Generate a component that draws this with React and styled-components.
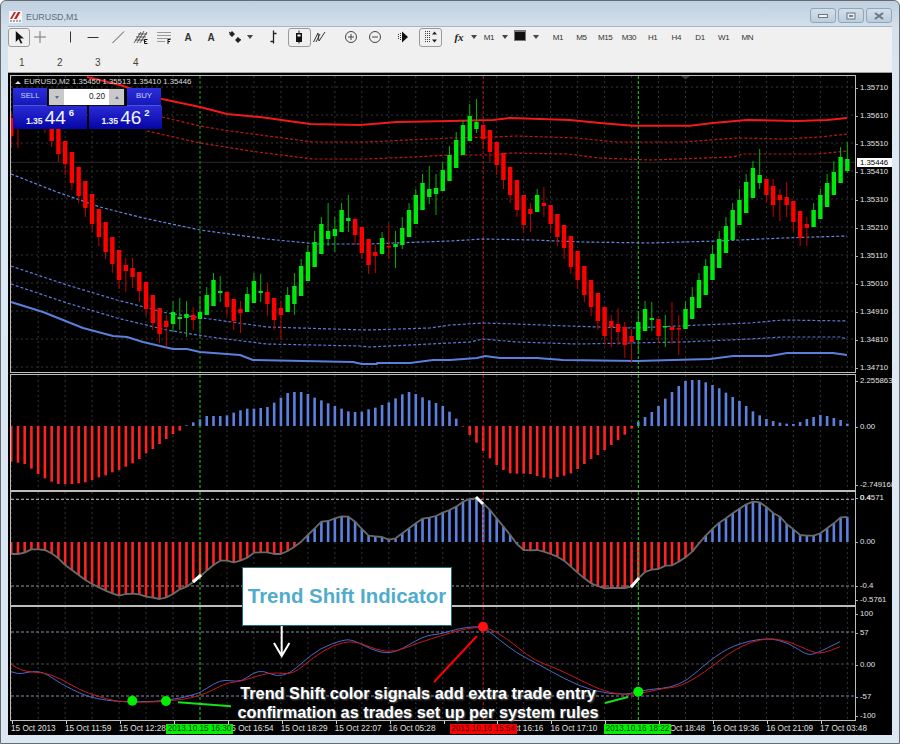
import React from "react";
import styled, { createGlobalStyle } from "styled-components";

const GlobalStyle = createGlobalStyle`
  html, body { margin: 0; padding: 0; background: #fff; }
  body { font-family: "Liberation Sans", Arial, sans-serif; }
`;

const Window = styled.div`
  box-sizing: border-box;
  width: 900px;
  height: 744px;
  display: flex;
  flex-direction: column;
  padding: 0 7px 8px 7px;
  border: 1px solid #666b70;
  border-radius: 6px 6px 0 0;
  background: linear-gradient(#bfd0e0 0, #d4e0ec 26px, #dce8f3 100px, #dbe7f3 100%);
  overflow: hidden;
`;

const TitleBar = styled.div`
  height: 25px;
  display: flex;
  justify-content: space-between;
  align-items: flex-start;
`;
const TitleLeft = styled.div`
  display: flex;
  align-items: center;
  gap: 4px;
  margin: 9px 0 0 1px;
  height: 13px;
`;
const TitleText = styled.span`
  font-size: 8.9px;
  color: #5d6c7a;
`;
const WinControls = styled.div`
  display: flex;
  gap: 2px;
  margin-top: 7px;
`;
const WinButton = styled.div`
  box-sizing: border-box;
  width: 26px;
  height: 15px;
  display: flex;
  align-items: center;
  justify-content: center;
  border: 1px solid #8fa6bb;
  border-radius: 3px;
  background: linear-gradient(#d3dfe9, #bccddc);
`;

const Toolbar = styled.div`
  height: 47px;
  box-sizing: border-box;
  background: #f0f0f0;
  border-top: 1px solid #a3b6c6;
  border-bottom: 1px solid #a0a0a0;
  display: flex;
  flex-direction: column;
`;
const ToolRow = styled.div`
  display: flex;
  align-items: center;
  height: 20px;
`;
const Tool = styled.div`
  box-sizing: border-box;
  flex: none;
  width: ${(p) => p.$w || 20}px;
  height: ${(p) => (p.$pressed ? 19 : 20)}px;
  margin-left: ${(p) => p.$ml || 0}px;
  display: flex;
  align-items: center;
  justify-content: center;
  border: ${(p) => (p.$pressed ? "1px solid #9a9a9a" : "none")};
  border-radius: 3px;
  font-size: ${(p) => (p.$period ? 8 : 10)}px;
  font-weight: ${(p) => (p.$letter ? 700 : 400)};
  letter-spacing: ${(p) => (p.$period ? -0.4 : 0)}px;
  color: #333;
`;
const FxGlyph = styled.span`
  font-family: "Liberation Serif", serif;
  font-style: italic;
  font-weight: 700;
  font-size: 11px;
  color: #222;
`;
const Caret = styled.span`
  width: 0;
  height: 0;
  border-left: 3.5px solid transparent;
  border-right: 3.5px solid transparent;
  border-top: 4px solid #444;
`;
const ColorBox = styled.span`
  box-sizing: border-box;
  width: 12px;
  height: 11px;
  margin-top: -3px;
  border: 1px solid #777;
  border-top-width: 2px;
  background: #111;
`;
const NumberRow = styled.div`
  display: flex;
  padding-left: 11px;
  margin-top: 10px;
`;
const NumberCell = styled.span`
  width: 38px;
  font-size: 10px;
  color: #4d3d2a;
`;

const Chart = styled.div`
  position: relative;
  flex: 1;
  background: #000;
  padding: 2px 0 0 2px;
  display: flex;
  flex-direction: column;
`;
const Pane = styled.div`
  display: flex;
  height: ${(p) => p.$h}px;
  margin-bottom: ${(p) => p.$mb || 0}px;
`;
const PlotSvg = styled.svg`
  display: block;
  flex: none;
  width: 846px;
  height: 100%;
  outline: 1px solid #bdbdbd;
  outline-offset: -1px;
`;
const Axis = styled.div`
  flex: 1;
  overflow: hidden;
  padding-top: ${(p) => p.$top}px;
  box-sizing: border-box;
  display: flex;
  flex-direction: column;
`;
const AxisTick = styled.div`
  height: ${(p) => p.$h || 0}px;
  flex: none;
  display: flex;
  gap: 2px;
  font-size: 7.8px;
  line-height: 0;
  white-space: nowrap;
  color: #e2e2e2;
  &::before {
    content: "";
    flex: none;
    width: 2px;
    height: 1px;
    background: #aaa;
  }
`;
const TimeAxis = styled.div`
  position: relative;
  flex: 1;
  display: grid;
  grid-template-columns: repeat(16, 53.94px);
  padding-left: 1px;
`;
const TimeCell = styled.div`
  font-size: 8.2px;
  line-height: 9px;
  white-space: nowrap;
  color: #e2e2e2;
  &::before {
    content: "";
    display: block;
    width: 1px;
    height: 3px;
    margin-left: 1px;
    background: #d0d0d0;
  }
`;
const TimeTag = styled.div`
  position: absolute;
  top: 3px;
  left: ${(p) => p.$left}px;
  width: 67px;
  height: 10px;
  line-height: 10px;
  text-align: center;
  font-size: 8.2px;
  color: ${(p) => p.$fg};
  background: ${(p) => p.$bg};
`;

const PriceTag = styled.div`
  position: absolute;
  left: 849px;
  top: 85px;
  width: 35px;
  height: 9px;
  line-height: 9px;
  padding-left: 3px;
  box-sizing: border-box;
  font-size: 7.8px;
  color: #000;
  background: #fff;
`;
const ChartHeader = styled.div`
  position: absolute;
  left: 7px;
  top: 4px;
  display: flex;
  align-items: center;
  gap: 3px;
  font-size: 7.8px;
  line-height: 10px;
  white-space: pre;
  color: #dcdcdc;
  &::before {
    content: "";
    width: 0;
    height: 0;
    border-left: 3px solid transparent;
    border-right: 3px solid transparent;
    border-bottom: 3px solid #ddd;
  }
`;

const TradePanel = styled.div`
  position: absolute;
  left: 5px;
  top: 15px;
  width: 149px;
  display: flex;
  flex-direction: column;
`;
const TradeTop = styled.div`
  display: flex;
  gap: 1px;
  height: 18px;
`;
const TradeBtn = styled.div`
  flex: none;
  width: 34px;
  margin-left: ${(p) => p.$ml || 0}px;
  box-sizing: border-box;
  text-align: center;
  font-size: 7.8px;
  line-height: 16px;
  color: #c9d6ff;
  background: linear-gradient(#2b2ddc, #1518b8);
  border-bottom: 1px solid #4a55d8;
`;
const LotBox = styled.div`
  flex: none;
  width: 77px;
  box-sizing: border-box;
  display: flex;
  align-items: stretch;
  border: 1px solid #111;
  background: #c9c9c9;
`;
const Spin = styled.div`
  width: 15px;
  display: flex;
  align-items: center;
  justify-content: center;
  &::before {
    content: "";
    width: 0;
    height: 0;
    border-left: 2.5px solid transparent;
    border-right: 2.5px solid transparent;
    border-${(p) => (p.$up ? "bottom" : "top")}: 3px solid #5a6a9a;
  }
`;
const LotValue = styled.div`
  flex: 1;
  background: #fff;
  font-size: 8.2px;
  line-height: 16px;
  text-align: right;
  padding-right: 4px;
  color: #222;
`;
const TradeBottom = styled.div`
  display: flex;
  gap: 2px;
`;
const Quote = styled.div`
  width: ${(p) => p.$w}px;
  height: 23px;
  box-sizing: border-box;
  display: flex;
  justify-content: center;
  align-items: flex-start;
  color: #f2f4ff;
  background: linear-gradient(#2a2bd6, #0505a4);
`;
const QuoteSmall = styled.span`
  font-size: 8.6px;
  font-weight: 700;
  line-height: 10px;
  margin: 10px 2px 0 0;
`;
const QuoteBig = styled.span`
  font-size: 19px;
  line-height: 21px;
  margin-top: 1px;
`;
const QuoteSup = styled.span`
  font-size: 9.5px;
  font-weight: 700;
  line-height: 10px;
  margin: 2px 0 0 3px;
`;

const Overlay = styled.svg`
  position: absolute;
  left: 0;
  top: 0;
  pointer-events: none;
`;
const Callout = styled.div`
  position: absolute;
  left: 234px;
  top: 494px;
  width: 210px;
  height: 59px;
  box-sizing: border-box;
  border: 1px solid #1f6f82;
  background: #fff;
  display: flex;
  align-items: center;
  justify-content: center;
  font-size: 20.4px;
  font-weight: 700;
  color: #4faccb;
`;
const Note = styled.div`
  position: absolute;
  left: 229px;
  top: 611px;
  width: 362px;
  text-align: center;
  font-size: 16.3px;
  line-height: 19px;
  font-weight: 700;
  white-space: nowrap;
  color: #fff;
  text-shadow: 1px 1px 2px #666;
`;

const X0 = 11.2;
const STEP = 6.743;
const xi = (i) => X0 + STEP * i;
const idx = (n) => Array.from({ length: n }, (_, i) => i);

const CANDLES = [
  ["r",118,136,112,147],["r",112,128,108,148],["r",105,122,100,128],["r",102,122,98,128],["r",104,124,100,128],["r",112,128,108,133],
  ["r",118,141,112,147],["r",124,154,120,162],["r",141,164,141,175],["r",152,183,152,190],["r",167,196,167,203],["r",181,208,181,217],
  ["r",194,224,194,232],["r",209,237,209,246],["r",222,252,222,259],["r",237,264,237,273],["r",250,280,250,289],["r",265,271,258,292],
  ["r",268,277,258,288],["r",272,291,272,302],["r",282,309,282,316],["r",295,323,295,330],["r",308,334,308,343],["r",321,327,315,347],
  ["g",312,324,301,332],["g",317,319,298,330],["g",314,318,301,337],["r",315,320,307,330],["g",312,319,298,331],["g",295,315,287,315],
  ["g",280,306,273,306],["g",291,293,276,302],["r",292,307,291,316],["r",299,321,299,330],["r",309,313,301,333],["g",294,312,287,312],
  ["g",281,303,273,303],["g",291,293,274,302],["r",292,304,283,316],["r",298,320,298,330],["r",308,315,301,340],["g",295,312,287,312],
  ["g",286,304,273,315],["g",266,296,259,296],["g",252,281,245,281],["g",242,267,231,267],["g",224,254,217,254],["g",231,239,203,246],
  ["g",229,236,217,252],["g",210,232,203,232],["g",218,221,195,232],["r",219,235,218,245],["r",227,253,227,259],["r",239,265,239,274],
  ["r",252,256,245,273],["g",238,254,232,254],["r",246,247,223,259],["g",244,247,231,268],["g",228,245,217,249],["g",210,237,203,237],
  ["g",195,224,189,224],["g",183,210,174,210],["g",189,197,166,204],["g",188,194,174,215],["g",170,191,162,191],["g",155,181,146,181],
  ["g",140,168,132,168],["g",125,155,120,155],["g",116,141,104,141],["g",122,129,99,133],["r",125,139,125,149],["r",130,152,130,162],
  ["r",142,165,142,175],["r",153,180,153,189],["r",167,195,167,203],["r",180,210,180,217],["r",195,225,195,233],["r",209,214,203,232],
  ["g",195,212,189,212],["r",203,206,187,217],["r",205,224,205,233],["r",214,237,214,246],["r",225,248,225,259],["r",236,267,236,274],
  ["r",251,280,251,289],["r",266,295,266,302],["r",280,307,280,316],["r",293,321,293,330],["r",307,336,307,345],["r",321,327,315,347],
  ["r",324,332,308,345],["r",327,345,322,358],["r",336,342,329,363],["g",322,340,313,353],["g",309,331,301,331],["g",318,320,302,331],
  ["r",319,336,319,343],["g",326,327,315,347],["r",327,330,302,344],["r",328,329,315,355],["g",309,329,301,329],["g",297,319,287,319],
  ["g",280,308,273,308],["g",266,295,259,295],["g",254,280,245,280],["g",239,268,231,268],["g",226,253,217,253],["g",210,240,203,240],
  ["g",200,225,189,225],["g",182,213,174,213],["g",168,198,161,198],["g",175,183,149,189],["r",179,195,179,203],["r",186,205,179,217],
  ["r",195,200,189,221],["r",197,205,182,217],["r",201,222,201,232],["r",211,238,211,246],["r",224,228,217,246],["g",210,227,203,227],
  ["g",195,219,189,219],["g",183,207,174,207],["g",172,195,161,195],["g",157,183,147,183],["g",159,171,142,173],
];

const RED_SOLID = "87,77 120,85 162,99 200,107 227,114 260,117 310,124 360,125 397,122 450,121 493,120 510,118 570,120 600,123 633,125.7 690,125.7 713,123 747,120 797,121 827,120 847,118";
const RED_A = "162,117 200,126 223,130 313,142 367,142 450,138 493,137 517,136 577,138 617,142 683,142 737,138 783,139 820,137 847,134";
const RED_B = "147,131 200,143 250,151 313,159 367,159 413,157 450,155 493,155 510,153 567,154 600,158 650,160 733,157 743,154 817,154 847,151";
const BLUE_A = "11,174 57,192 100,207 143,218 200,230 267,239 317,244 367,244 450,241 483,239 533,240 583,242 650,243 717,241 783,238 847,236";
const BLUE_B = "11,266 67,285 117,300 167,313 210,319 267,327 333,329 367,330 430,328 450,325 483,323 517,324 567,326 633,328 700,325 750,323 783,320 847,321";
const BLUE_C = "11,284 67,303 117,318 167,330 210,337 267,344 360,346 370,347 450,343 470,342 483,339 517,342 577,344 683,342 750,339 783,337 840,337 847,339";
const BLUE_SOLID = "11,302 43,312 83,328 113,336 127,337 143,342 173,349 187,349 200,352 240,355 253,360 353,362 362,364 377,364 377,363 410,363 433,360 450,360 477,358 485,356 500,358 537,358 563,360 637,361 710,359 733,356 770,356 787,353 833,353 847,355";

/* y values of the histogram tops, in 3x crop units of the band that begins at y = 370 */
const HIST = [275,278,282,296,312,325,335,342,343,342,340,337,330,322,316,307,300,290,280,267,250,237,222,207,192,182,166,157,148,138,138,138,136,128,121,116,116,114,111,98,83,69,66,66,72,83,91,100,108,116,124,126,125,118,113,105,97,85,73,66,72,82,91,99,108,125,146,170,195,218,243,265,285,300,310,311,311,312,318,323,326,321,317,310,297,282,267,255,240,225,210,194,176,155,141,126,108,86,66,48,33,30,30,37,45,55,68,81,93,108,124,136,147,153,158,161,162,156,147,141,135,138,144,150,161];
const WAVE = [552,552,548,538,538,540,550,565,585,600,615,630,642,652,662,670,677,672,671,673,680,683,687,682,672,658,650,636,620,602,585,572,572,577,572,563,548,547,547,552,552,543,530,515,495,475,455,453,445,439,440,455,477,497,499,501,509,505,490,475,460,446,443,438,428,420,410,395,387,385,400,420,445,470,495,522,540,541,540,545,552,560,572,590,608,625,640,648,655,654,654,654,650,625,606,599,597,587,586,575,562,545,520,497,477,458,445,430,416,403,395,397,411,429,440,462,478,495,497,497,490,475,460,442,441];

const zy = (Y) => 370 + Y / 3;
const crop = (pairs, ox) => pairs.map(([X, Y]) => [ox + X / 3, 560 + Y / 3]);
const smooth = (pts) => {
  let d = `M${pts[0][0]} ${pts[0][1]}`;
  for (let i = 1; i < pts.length - 1; i++) {
    const mx = (pts[i][0] + pts[i + 1][0]) / 2;
    const my = (pts[i][1] + pts[i + 1][1]) / 2;
    d += `Q${pts[i][0]} ${pts[i][1]} ${mx} ${my}`;
  }
  const last = pts[pts.length - 1];
  return d + `L${last[0]} ${last[1]}`;
};
const SIG_BLUE = smooth([...crop([[33,335],[55,343],[80,337],[115,333],[145,345],[180,370],[250,405],[290,416],[350,425],[420,425],[500,423],[590,403],[620,385],[660,361],[690,362],[725,365],[760,338],[790,332],[830,350],[870,340],[910,305],[960,265],[1030,239],[1060,240],[1130,276],[1185,280],[1270,228],[1320,222],[1350,213]],0), ...crop([[50,201],[100,200],[130,225],[200,280],[270,315],[340,355],[430,395],[530,405],[580,390],[690,380],[780,300],[850,255],[950,232],[1020,250],[1070,286],[1100,280],[1170,245]],450)]);
const SIG_RED = smooth([...crop([[33,313],[65,335],[130,337],[180,355],[240,390],[290,408],[350,425],[420,427],[500,425],[600,410],[680,368],[720,365],[790,342],[830,338],[880,343],[940,292],[1000,255],[1060,241],[1130,270],[1185,277],[1250,250],[1340,222]],0), ...crop([[50,205],[110,200],[170,235],[250,300],[320,325],[420,375],[480,400],[550,405],[640,385],[690,380],[760,340],[860,262],[950,232],[1020,245],[1090,278],[1120,280],[1170,260]],450)]);

const GRID_X = idx(32).map((k) => xi(k * 4));

function Grid({ top, bottom, ys = [] }) {
  return (
    <g stroke="#343434" strokeWidth="1" strokeDasharray="2 3" fill="none">
      {GRID_X.map((x) => <line key={x} x1={x} x2={x} y1={top} y2={bottom} />)}
      {ys.map((y) => <line key={y} x1="11" x2="855" y1={y} y2={y} />)}
    </g>
  );
}
function Markers({ top, bottom, dim }) {
  return (
    <g strokeWidth="1" strokeDasharray="3 2" fill="none">
      <line x1="200" x2="200" y1={top} y2={bottom} stroke={dim ? "#0a9a0a" : "#0fc00f"} />
      <line x1="483.2" x2="483.2" y1={top} y2={bottom} stroke="#c01818" />
      <line x1="638.3" x2="638.3" y1={top} y2={bottom} stroke="#12e012" />
    </g>
  );
}

function PricePlot() {
  const gridY = idx(11).map((k) => 87 + 28 * k);
  return (
    <PlotSvg viewBox="10 75 846 298">
      <Grid top={76} bottom={372} ys={gridY} />
      <line x1="11" x2="855" y1="162.3" y2="162.3" stroke="#2a2a2a" />
      <path d="M681 76h9l-4.5 3.5z" fill="#3a3a3a" />
      <Markers top={76} bottom={372} dim />
      <g fill="none" strokeLinejoin="round">
        <polyline points={RED_A} stroke="#c01818" strokeWidth="1.2" strokeDasharray="3 2" />
        <polyline points={RED_B} stroke="#c01818" strokeWidth="1.2" strokeDasharray="3 2" />
        <polyline points={BLUE_A} stroke="#6488e4" strokeWidth="1.2" strokeDasharray="3 2" />
        <polyline points={BLUE_B} stroke="#5a7ad8" strokeWidth="1.2" strokeDasharray="3 2" />
        <polyline points={BLUE_C} stroke="#5a7ad8" strokeWidth="1.2" strokeDasharray="3 2" />
        <polyline points={RED_SOLID} stroke="#f01a1a" strokeWidth="2" />
        <polyline points={BLUE_SOLID} stroke="#5b7fdc" strokeWidth="2" />
      </g>
      {CANDLES.map(([c, top, bot, hi, lo], i) => {
        const x = xi(i);
        const wick = c === "r" ? "#c40000" : "#00b400";
        const body = c === "r" ? "#ff0000" : "#00e90c";
        return (
          <g key={i}>
            <line x1={x} x2={x} y1={hi} y2={lo} stroke={wick} />
            <rect x={x - 2.2} y={top} width="4.4" height={Math.max(bot - top, 1.5)} fill={body} />
          </g>
        );
      })}
    </PlotSvg>
  );
}

function HistPlot() {
  return (
    <PlotSvg viewBox="10 374 846 117">
      <Grid top={375} bottom={490} />
      {HIST.map((Y, i) => {
        const y = zy(Y);
        const base = zy(168);
        const up = y < base;
        return (
          <rect key={i} x={xi(i) - 1.3} width="2.6" y={Math.min(y, base)} height={Math.abs(y - base)} fill={up ? "#5b80e0" : "#ff2222"} />
        );
      })}
      <Markers top={375} bottom={490} />
    </PlotSvg>
  );
}

function WavePlot() {
  const base = zy(516);
  const pts = WAVE.map((Y, i) => `${xi(i)},${zy(Y)}`).join(" ");
  const isBlue = (i) => (i >= 43 && i <= 75) || i >= 103;
  return (
    <PlotSvg viewBox="10 491 846 115">
      <Grid top={492} bottom={605} />
      <line x1="11" x2="855" y1="499.3" y2="499.3" stroke="#c8c8c8" strokeDasharray="3 2" />
      <line x1="11" x2="855" y1="586" y2="586" stroke="#9a9a9a" strokeDasharray="3 2" />
      {WAVE.map((Y, i) => {
        const y = zy(Y);
        return (
          <rect key={i} x={xi(i) - 1.3} width="2.6" y={Math.min(y, base)} height={Math.abs(y - base)} fill={isBlue(i) ? "#5b80e0" : "#ff2222"} />
        );
      })}
      <Markers top={492} bottom={605} />
      <polyline points={pts} fill="none" stroke="#6a6a6a" strokeWidth="1.8" strokeLinejoin="round" />
      <g stroke="#fff" strokeWidth="3" fill="none">
        <line x1="193" y1="582" x2="201" y2="575" />
        <line x1="476" y1="497" x2="483" y2="504" />
        <line x1="631" y1="587" x2="639" y2="578" />
      </g>
    </PlotSvg>
  );
}

function SignalPlot() {
  return (
    <PlotSvg viewBox="10 606 846 115">
      <Grid top={607} bottom={720} />
      <g strokeDasharray="3 2">
        <line x1="11" x2="855" y1="632" y2="632" stroke="#8a92a8" />
        <line x1="11" x2="855" y1="664" y2="664" stroke="#4a4a55" />
        <line x1="11" x2="855" y1="696" y2="696" stroke="#8a92a8" />
      </g>
      <Markers top={607} bottom={720} />
      <path d={SIG_BLUE} fill="none" stroke="#4f68c8" />
      <path d={SIG_RED} fill="none" stroke="#c41a20" />
    </PlotSvg>
  );
}

const I = ({ children }) => (
  <svg width="16" height="16" viewBox="0 0 16 16" fill="none">{children}</svg>
);
const icons = {
  cursor: <I><path d="M4.5 1.5v12l3-3 2.2 4.5 2-1-2.2-4.3h4z" fill="#111" stroke="#fff" strokeWidth=".5" /></I>,
  cross: <I><path d="M8 2v12M2 8h12" stroke="#777" /></I>,
  vline: <I><path d="M8.5 2.5v11" stroke="#333" /></I>,
  hline: <I><path d="M2.5 8.5h11" stroke="#333" /></I>,
  trend: <I><path d="M2.5 14L14 2.5" stroke="#555" /></I>,
  channel: <I><path d="M1 14L8 3M4 14L11 2M7 14l7-11M2 11h10M3 8h10M5 5h9" stroke="#333" strokeWidth=".8" /><path d="M11.5 10.5h3M11.5 10.5v4h3M11.5 12.5h2" stroke="#111" /></I>,
  fib: <I><path d="M1.5 3.5h13M1.5 6.5h13M1.5 9.5h13M1.5 12.5h8" stroke="#444" strokeDasharray="1 1" /><path d="M12 10v5M12 10.5h2.5M12 12.5h2" stroke="#111" /></I>,
  arrows: <I><path d="M2 3l4 3M10 9l4 2" stroke="#222" /><path d="M2 5l3-3 3 3-3 3zM8 11l3-3 3 3-3 3z" fill="#222" /></I>,
  bar: <I><path d="M8.5 1.5v13M8.5 4.5h3M5.5 12.5h3" stroke="#222" strokeWidth="1.3" /></I>,
  candle: <I><path d="M8 1.5v13" stroke="#222" /><rect x="5.5" y="4.5" width="5" height="8" fill="#111" stroke="#111" /><rect x="6.5" y="5.5" width="3" height="2" fill="#fff" /></I>,
  line: <I><path d="M1.5 13L6 4l1 8 6-9M4 13l4-8" stroke="#333" /></I>,
  plus: <I><circle cx="8" cy="8" r="5.5" stroke="#444" /><path d="M8 5v6M5 8h6" stroke="#444" /></I>,
  minus: <I><circle cx="8" cy="8" r="5.5" stroke="#444" /><path d="M5 8h6" stroke="#444" /></I>,
  shift: <I><path d="M7 2.5L13 8l-6 5.5z" fill="#111" /><path d="M3.5 5v6M5.5 4v8" stroke="#333" strokeDasharray="1 1" /></I>,
  split: <I><path d="M2.5 2v12M4.5 2v12M6.5 2v12" stroke="#444" strokeDasharray="1 1" /><path d="M11.5 2.5l-2.5 3h5zM11.5 13.5l-2.5-3h5z" fill="#222" /></I>,
};

const PERIODS = ["M1", "M5", "M15", "M30", "H1", "H4", "D1", "W1", "MN"];
/* the cells left empty sit wholly under a highlighted date tag */
const TIMES = ["15 Oct 2013","15 Oct 11:59","15 Oct 12:28","","15 Oct 16:54","15 Oct 18:29","15 Oct 22:07","16 Oct 05:28","","16 Oct 16:16","16 Oct 17:10","","16 Oct 18:48","16 Oct 19:36","16 Oct 21:09","17 Oct 03:48"];

export default function App() {
  return (
    <>
      <GlobalStyle />
      <Window>
        <TitleBar>
          <TitleLeft>
            <svg width="13" height="12" viewBox="0 0 13 12">
              <rect width="13" height="12" fill="#f6f6f6" />
              <path d="M1 8L5 1h2L3 8zM5 8l4-7h2.5L7.5 8z" fill="#c41e1e" />
              <path d="M1 10h11" stroke="#555" strokeWidth="1" strokeDasharray="2 1" />
            </svg>
            <TitleText>EURUSD,M1</TitleText>
          </TitleLeft>
          <WinControls>
            <WinButton><svg width="10" height="6"><rect x=".5" y="1.5" width="9" height="3" fill="#eef3f7" stroke="#6a7680" /></svg></WinButton>
            <WinButton><svg width="10" height="8"><rect x="1" y="1" width="8" height="6" fill="#e4ebf1" stroke="#6a7680" strokeWidth="1" /><rect x="3" y="3" width="4" height="2" fill="#7a8690" /></svg></WinButton>
            <WinButton><svg width="10" height="8"><path d="M1 1l8 6M9 1L1 7" stroke="#6a7680" strokeWidth="2" /></svg></WinButton>
          </WinControls>
        </TitleBar>

        <Toolbar>
          <ToolRow>
            <Tool $w={22} $pressed>{icons.cursor}</Tool>
            <Tool>{icons.cross}</Tool>
            <Tool $ml={9.5}>{icons.vline}</Tool>
            <Tool $ml={3.5}>{icons.hline}</Tool>
            <Tool $ml={4.5}>{icons.trend}</Tool>
            <Tool $ml={3.5}>{icons.channel}</Tool>
            <Tool $ml={3}>{icons.fib}</Tool>
            <Tool $ml={4} $letter>A</Tool>
            <Tool $ml={3} $letter>A</Tool>
            <Tool $ml={4}>{icons.arrows}</Tool>
            <Tool $w={10}><Caret /></Tool>
            <Tool $ml={8}>{icons.bar}</Tool>
            <Tool $w={23} $ml={4.5} $pressed>{icons.candle}</Tool>
            <Tool $w={16} $ml={1.5}>{icons.line}</Tool>
            <Tool $ml={13}>{icons.plus}</Tool>
            <Tool $ml={4}>{icons.minus}</Tool>
            <Tool $ml={8}>{icons.shift}</Tool>
            <Tool $w={23} $ml={6} $pressed>{icons.split}</Tool>
            <Tool $ml={7}><FxGlyph>fx</FxGlyph></Tool>
            <Tool $w={10}><Caret /></Tool>
            <Tool $period>M1</Tool>
            <Tool $w={10} $ml={1}><Caret /></Tool>
            <Tool><ColorBox /></Tool>
            <Tool $w={10} $ml={1}><Caret /></Tool>
            {PERIODS.map((p, i) => (
              <Tool key={p} $w={23.7} $ml={i === 0 ? 5 : 0} $period>{p}</Tool>
            ))}
          </ToolRow>
          <NumberRow>
            {[1, 2, 3, 4].map((n) => <NumberCell key={n}>{n}</NumberCell>)}
          </NumberRow>
        </Toolbar>

        <Chart>
          <Pane $h={298} $mb={1}>
            <PricePlot />
            <Axis $top={13}>
              {["1.35710","1.35610","1.35510","1.35410","1.35310","1.35210","1.35110","1.35010","1.34910","1.34810","1.34710"].map((t) => (
                <AxisTick key={t} $h={28}>{t}</AxisTick>
              ))}
            </Axis>
          </Pane>
          <Pane $h={117}>
            <HistPlot />
            <Axis $top={7}>
              <AxisTick $h={46}>2.255863</AxisTick>
              <AxisTick $h={58}>0.00</AxisTick>
              <AxisTick>-2.749168</AxisTick>
            </Axis>
          </Pane>
          <Pane $h={115}>
            <WavePlot />
            <Axis $top={7}>
              <AxisTick>0.4571</AxisTick>
              <AxisTick $h={44}>0.4</AxisTick>
              <AxisTick $h={44}>0.00</AxisTick>
              <AxisTick $h={14}>-0.4</AxisTick>
              <AxisTick>-0.5761</AxisTick>
            </Axis>
          </Pane>
          <Pane $h={115}>
            <SignalPlot />
            <Axis $top={8}>
              <AxisTick $h={19}>100</AxisTick>
              <AxisTick $h={32}>57</AxisTick>
              <AxisTick $h={32}>0.00</AxisTick>
              <AxisTick $h={19}>-57</AxisTick>
              <AxisTick>-100</AxisTick>
            </Axis>
          </Pane>
          <TimeAxis>
            {TIMES.map((t, i) => <TimeCell key={i}>{t}</TimeCell>)}
            <TimeTag $left={156} $bg="#00f000" $fg="#0a3a0a">2013.10.15 16:30</TimeTag>
            <TimeTag $left={439.5} $bg="#ff0000" $fg="#3a0606">2013.10.16 15:54</TimeTag>
            <TimeTag $left={594} $bg="#00f000" $fg="#0a3a0a">2013.10.16 18:22</TimeTag>
          </TimeAxis>

          <ChartHeader>{"EURUSD,M2 1.35450 1.35513 1.35410 1.35446"}</ChartHeader>
          <PriceTag>1.35446</PriceTag>
          <TradePanel>
            <TradeTop>
              <TradeBtn>SELL</TradeBtn>
              <LotBox>
                <Spin />
                <LotValue>0.20</LotValue>
                <Spin $up />
              </LotBox>
              <TradeBtn $ml={1}>BUY</TradeBtn>
            </TradeTop>
            <TradeBottom>
              <Quote $w={74}><QuoteSmall>1.35</QuoteSmall><QuoteBig>44</QuoteBig><QuoteSup>6</QuoteSup></Quote>
              <Quote $w={73}><QuoteSmall>1.35</QuoteSmall><QuoteBig>46</QuoteBig><QuoteSup>2</QuoteSup></Quote>
            </TradeBottom>
          </TradePanel>

          <Overlay width="884" height="662" viewBox="8 73 884 662">
            <line x1="178" y1="702.3" x2="231" y2="706.3" stroke="#16e016" strokeWidth="2" />
            <line x1="605" y1="703" x2="628" y2="697" stroke="#16e016" strokeWidth="2" />
            <line x1="434" y1="682" x2="477" y2="636" stroke="#f00" strokeWidth="2" />
            <path d="M281.7 626v30M274 643l7.7 13 7.7-13" stroke="#fff" strokeWidth="2" fill="none" />
            <circle cx="132.3" cy="700.7" r="5" fill="#00f000" />
            <circle cx="166" cy="701" r="5" fill="#00f000" />
            <circle cx="638.3" cy="691.7" r="5" fill="#00f000" />
            <circle cx="483" cy="626.7" r="5" fill="#ff1010" />
          </Overlay>
          <Callout>Trend Shift Indicator</Callout>
          <Note>
            Trend Shift color signals add extra trade entry<br />
            confirmation as trades set up per system rules
          </Note>
        </Chart>
      </Window>
    </>
  );
}
